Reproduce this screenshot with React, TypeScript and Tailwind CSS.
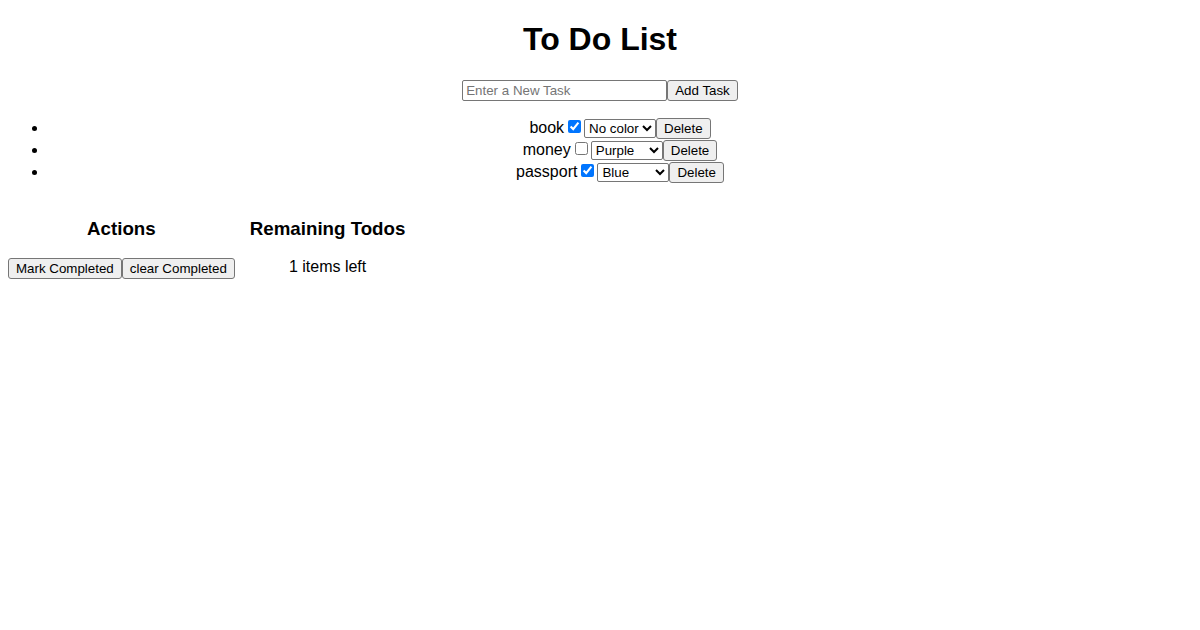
import React, { useState } from 'react';

interface Todo {
  id: number;
  text: string;
  done: boolean;
  color: string;
}

const colors = ['No color', 'Purple', 'Blue'];

const btn =
  'inline-block align-baseline bg-[#efefef] border border-[#767676] rounded-[3px] px-[7px] py-[2px] text-[13.333px] leading-[normal] text-black';

export default function App() {
  const [todos, setTodos] = useState<Todo[]>([
    { id: 1, text: 'book', done: true, color: 'No color' },
    { id: 2, text: 'money', done: false, color: 'Purple' },
    { id: 3, text: 'passport', done: true, color: 'Blue' },
  ]);
  const [task, setTask] = useState('');

  const left = todos.filter((t) => !t.done).length;

  const addTask = () => {
    if (!task.trim()) return;
    setTodos([...todos, { id: Date.now(), text: task, done: false, color: 'No color' }]);
    setTask('');
  };

  return (
    <div className="px-2 text-base leading-[normal] text-black font-['Liberation_Sans',Arial,sans-serif]">
      <h1 className="text-center text-[32px] font-bold mt-[21.44px] mb-[21.44px]">To Do List</h1>

      <div className="text-center">
        <input
          type="text"
          value={task}
          onChange={(e) => setTask(e.target.value)}
          placeholder="Enter a New Task"
          className="inline-block align-baseline w-[205px] h-[21px] border border-[#767676] rounded-[2px] px-[3px] py-px text-[13.333px] bg-white placeholder:text-[#757575]"
        /><button className={btn} onClick={addTask}>Add Task</button>
      </div>

      <ul className="list-disc pl-10 my-4">
        {todos.map((t) => (
          <li key={t.id} className="text-center">
            {t.text}<input
              type="checkbox"
              checked={t.done}
              onChange={() => setTodos(todos.map((x) => (x.id === t.id ? { ...x, done: !x.done } : x)))}
              className="mt-[3px] mb-[3px] ml-[4px] mr-[3px] w-[13px] h-[13px]"
            /><select
              value={t.color}
              onChange={(e) => setTodos(todos.map((x) => (x.id === t.id ? { ...x, color: e.target.value } : x)))}
              className="bg-white border border-[#767676] rounded-[2px] text-[13.333px] text-black"
            >
              {colors.map((c) => (
                <option key={c} value={c}>{c}</option>
              ))}
            </select><button
              className={btn}
              onClick={() => setTodos(todos.filter((x) => x.id !== t.id))}
            >
              Delete
            </button>
          </li>
        ))}
      </ul>

      <div className="flex items-start gap-[15px]">
        <div className="text-center">
          <h3 className="text-[18.72px] font-bold my-[18.72px]">Actions</h3>
          <div>
            <button className={btn} onClick={() => setTodos(todos.map((x) => ({ ...x, done: true })))}>
              Mark Completed
            </button><button className={btn} onClick={() => setTodos(todos.filter((x) => !x.done))}>
              clear Completed
            </button>
          </div>
        </div>
        <div className="text-center">
          <h3 className="text-[18.72px] font-bold my-[18.72px]">Remaining Todos</h3>
          <div>{left} items left</div>
        </div>
      </div>
    </div>
  );
}
